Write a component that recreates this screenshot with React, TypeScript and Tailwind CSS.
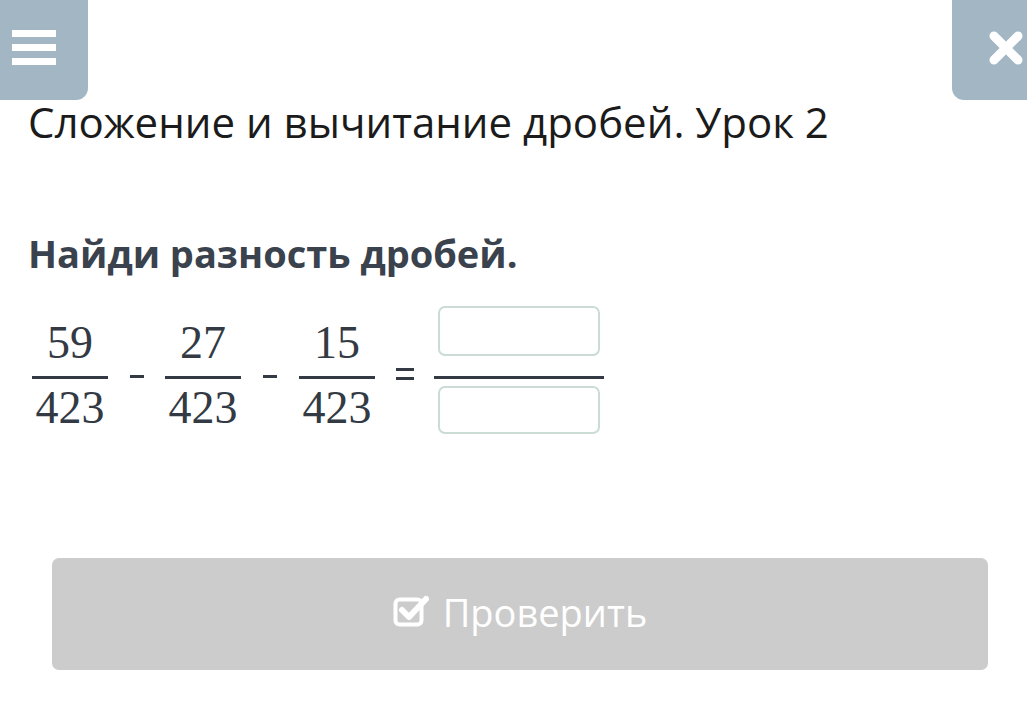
import React from "react";

const serif = { fontFamily: '"Liberation Serif", "DejaVu Serif", serif' };

function Frac({ n, d }: { n: string; d: string }) {
  return (
    <div className="flex flex-col items-center w-[76px] self-start mt-[14px]">
      <div className="text-[46px] leading-[46px] text-[#333a44]" style={serif}>{n}</div>
      <div className="h-[3px] w-full bg-[#333a44] mt-[10px]" />
      <div className="text-[46px] leading-[46px] text-[#333a44] mt-[6px]" style={serif}>{d}</div>
    </div>
  );
}

export default function App() {
  return (
    <div className="relative w-[1027px] h-[721px] bg-white overflow-hidden" style={{ fontFamily: '"Open Sans", sans-serif' }}>
      <div className="absolute left-0 top-0 w-[88px] h-[100px] bg-[#a3b6c3] rounded-br-[12px] flex items-center justify-center">
        <div className="flex flex-col gap-[7px] mt-[-6px] ml-[-20px]">
          <div className="w-[44px] h-[7px] bg-white" />
          <div className="w-[44px] h-[7px] bg-white" />
          <div className="w-[44px] h-[7px] bg-white" />
        </div>
      </div>
      <div className="absolute right-0 top-0 w-[75px] h-[100px] bg-[#a3b6c3] rounded-bl-[12px] flex items-center">
        <svg width="36" height="36" viewBox="0 0 36 36" className="ml-[36px] mt-[-4px]">
          <path d="M6 6 L30 30 M30 6 L6 30" stroke="white" strokeWidth="9" strokeLinecap="round" />
        </svg>
      </div>

      <div className="pt-[96px] pl-[28px]">
        <h1 className="text-[42px] leading-[52px] text-[#1b1b1b] font-normal">Сложение и вычитание дробей. Урок 2</h1>
        <h2 className="mt-[83px] text-[38px] leading-[44px] font-bold text-[#3a424d]">Найди разность дробей.</h2>
        <div className="mt-[31px] flex items-start ml-[4px]">
          <Frac n="59" d="423" />
          <div className="w-[57px] flex justify-center mt-[69px]"><div className="w-[14px] h-[3px] bg-[#333a44]" /></div>
          <Frac n="27" d="423" />
          <div className="w-[58px] flex justify-center mt-[69px]"><div className="w-[14px] h-[3px] bg-[#333a44]" /></div>
          <Frac n="15" d="423" />
          <div className="w-[59px] flex flex-col items-center gap-[6px] mt-[62px]">
            <div className="w-[18px] h-[3px] bg-[#333a44]" />
            <div className="w-[18px] h-[3px] bg-[#333a44]" />
          </div>
          <div className="flex flex-col items-center w-[170px]">
            <div className="w-[162px] h-[50px] border-2 border-[#cbdcd5] rounded-[7px]" />
            <div className="w-full h-[3px] bg-[#333a44] mt-[20px] mb-[7px]" />
            <div className="w-[162px] h-[48px] border-2 border-[#cbdcd5] rounded-[7px]" />
          </div>
        </div>
      </div>

      <div className="absolute left-[52px] top-[558px] w-[936px] h-[112px] bg-[#cccccc] rounded-[7px] flex items-center justify-center gap-[14px]">
        <svg width="36" height="32" viewBox="0 0 36 32" className="mt-[-6px]">
          <rect x="2.5" y="4.5" width="26" height="25" rx="4" fill="none" stroke="white" strokeWidth="4" />
          <path d="M9 15 L16 22 L33 4" fill="none" stroke="white" strokeWidth="6" strokeLinecap="round" strokeLinejoin="round" />
        </svg>
        <span className="text-[38px] text-white leading-none mt-[-4px]">Проверить</span>
      </div>
    </div>
  );
}
